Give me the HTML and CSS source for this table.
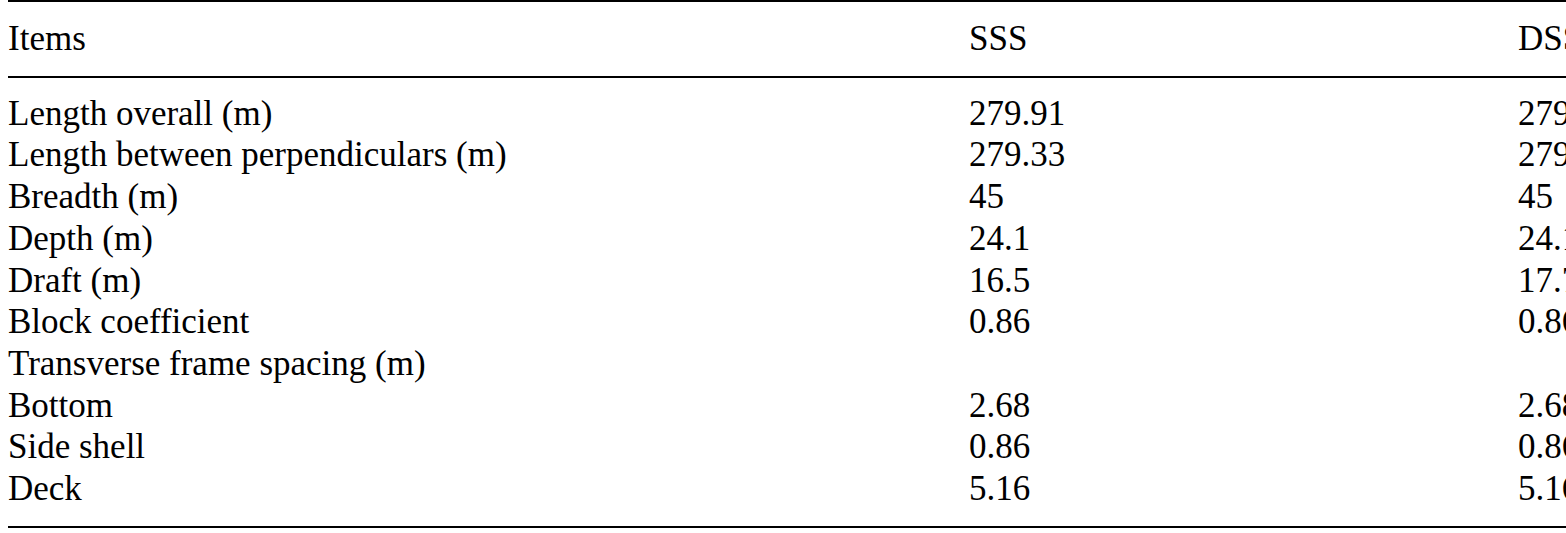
FILE: index.html
```html
<!DOCTYPE html>
<html lang="en">
<head>
  <meta charset="UTF-8">
  <title>Ship particulars</title>
  <link rel="stylesheet" href="styles.css">
</head>
<body>
  <table class="spec-table">
    <colgroup>
      <col class="col-item">
      <col class="col-sss">
      <col class="col-dss">
    </colgroup>
    <thead>
      <tr>
        <th>Items</th>
        <th>SSS</th>
        <th>DSS</th>
      </tr>
    </thead>
    <tbody>
      <tr class="first-row"><td>Length overall (m)</td><td>279.91</td><td>279.91</td></tr>
      <tr><td>Length between perpendiculars (m)</td><td>279.33</td><td>279.33</td></tr>
      <tr><td>Breadth (m)</td><td>45</td><td>45</td></tr>
      <tr><td>Depth (m)</td><td>24.1</td><td>24.1</td></tr>
      <tr><td>Draft (m)</td><td>16.5</td><td>17.7</td></tr>
      <tr><td>Block coefficient</td><td>0.86</td><td>0.86</td></tr>
      <tr><td>Transverse frame spacing (m)</td><td></td><td></td></tr>
      <tr><td>Bottom</td><td>2.68</td><td>2.68</td></tr>
      <tr><td>Side shell</td><td>0.86</td><td>0.86</td></tr>
      <tr class="last-row"><td>Deck</td><td>5.16</td><td>5.16</td></tr>
    </tbody>
  </table>
</body>
</html>
```

FILE: styles.css
```css
html, body {
  overflow: hidden;
}
body {
  margin: 0 0 0 8px;
  background: #fff;
  color: #000;
  font-family: "Liberation Serif", "Times New Roman", serif;
  font-size: 35px;
}
.spec-table {
  width: 1700px;
  table-layout: fixed;
  border-collapse: collapse;
}
.col-item {
  width: 961px;
}
.col-sss {
  width: 549px;
}
.spec-table th,
.spec-table td {
  padding: 0;
  text-align: left;
  font-weight: normal;
  line-height: 41.7px;
  white-space: nowrap;
  vertical-align: top;
}
.spec-table thead th {
  border-top: 2px solid #000;
  border-bottom: 2px solid #000;
  padding-top: 16px;
  padding-bottom: 16px;
}
.spec-table .first-row td {
  padding-top: 15px;
}
.spec-table .last-row td {
  padding-bottom: 16.3px;
  border-bottom: 2px solid #000;
}
```
